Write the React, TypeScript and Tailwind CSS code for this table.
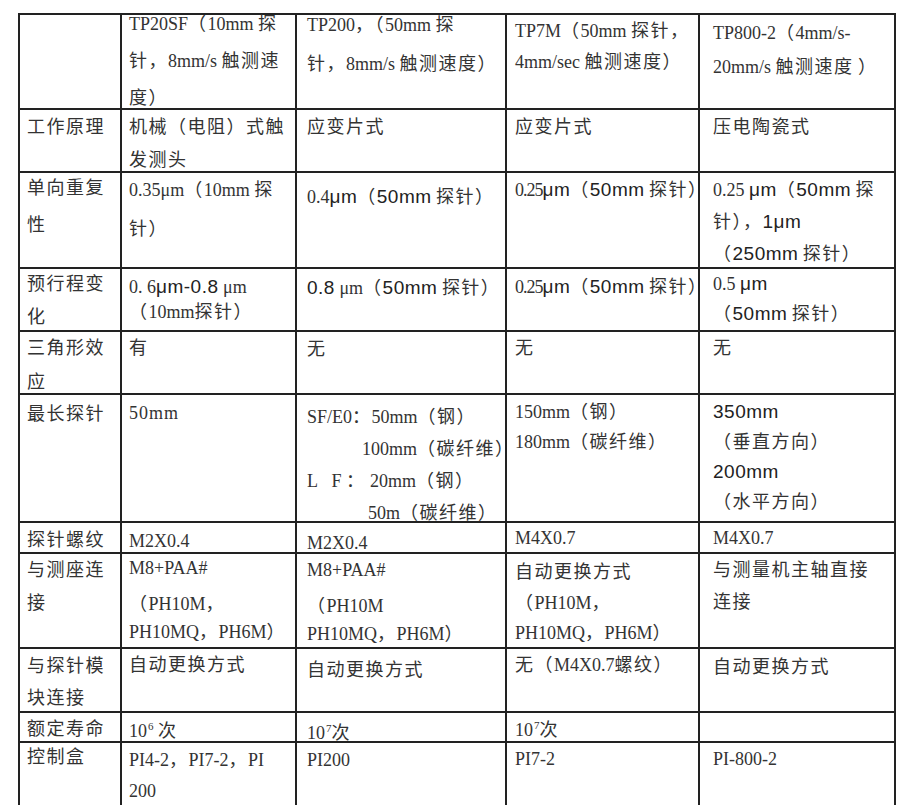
import { Children, type FC, type ReactNode } from "react";

const CJK = /([\u3000-\u303f\u4e00-\u9fff\uff00-\uffef]+)/;

const spaced = (s: string) =>
  s.split(CJK).map((part, i) =>
    i % 2 === 1 ? (
      <span key={i} className="tracking-[1.5px]">
        {part}
      </span>
    ) : (
      part
    )
  );

const Ln: FC<{ className?: string; children?: ReactNode }> = ({ className = "", children }) => (
  <div className={`h-[12px] whitespace-nowrap leading-[12px] ${className}`}>
    {Children.map(children, (c) => (typeof c === "string" ? spaced(c) : c))}
  </div>
);

// Arial-looking runs (μm, 50mm ...)
const S: FC<{ children: ReactNode }> = ({ children }) => (
  <span className="font-['Liberation_Sans',sans-serif] text-[19px] tracking-[0.5px] text-[#222]">{children}</span>
);

const Sup: FC<{ children: ReactNode }> = ({ children }) => (
  <sup className="relative -top-[7px] ml-[1px] text-[11px]">{children}</sup>
);

const Cell: FC<{ className?: string; children?: ReactNode }> = ({ className = "", children }) => (
  <div className={`flex flex-col bg-white ${className}`}>{children}</div>
);

export default function App() {
  return (
    <div className="min-h-screen overflow-hidden bg-white pl-[18px] pt-[13px] font-['Liberation_Serif','Noto_Sans_CJK_SC',serif] text-[18px] text-[#333]">
      <div className="grid w-max grid-cols-[100px_173px_208px_191px_194px] grid-rows-[93px_61px_94px_61px_61px_126px_29px_93px_62px_28px_90px] gap-[2px] bg-[#222] p-[2px]">
        {/* header */}
        <Cell />
        <Cell className="gap-[25px] pl-[7px] pt-[3px]">
          <Ln>TP20SF（10mm 探</Ln>
          <Ln>针，8mm/s 触测速</Ln>
          <Ln>度）</Ln>
        </Cell>
        <Cell className="gap-[27px] pl-[10px] pt-[4px]">
          <Ln>TP200，（50mm 探</Ln>
          <Ln>针，8mm/s 触测速度）</Ln>
        </Cell>
        <Cell className="gap-[19px] pl-[8px] pt-[10px]">
          <Ln>TP7M（50mm 探针，</Ln>
          <Ln>4mm/sec 触测速度）</Ln>
        </Cell>
        <Cell className="gap-[22px] pl-[13px] pt-[12px]">
          <Ln>TP800-2（4mm/s-</Ln>
          <Ln>20mm/s 触测速度 ）</Ln>
        </Cell>

        {/* 工作原理 */}
        <Cell className="pl-[7px] pt-[11px]">
          <Ln>工作原理</Ln>
        </Cell>
        <Cell className="gap-[21px] pl-[7px] pt-[11px]">
          <Ln>机械（电阻）式触</Ln>
          <Ln>发测头</Ln>
        </Cell>
        <Cell className="pl-[10px] pt-[11px]">
          <Ln>应变片式</Ln>
        </Cell>
        <Cell className="pl-[8px] pt-[11px]">
          <Ln>应变片式</Ln>
        </Cell>
        <Cell className="pl-[13px] pt-[11px]">
          <Ln>压电陶瓷式</Ln>
        </Cell>

        {/* 单向重复性 */}
        <Cell className="gap-[25px] pl-[7px] pt-[9px]">
          <Ln>单向重复</Ln>
          <Ln>性</Ln>
        </Cell>
        <Cell className="gap-[27px] pl-[7px] pt-[11px]">
          <Ln>0.35μm（10mm 探</Ln>
          <Ln>针）</Ln>
        </Cell>
        <Cell className="pl-[10px] pt-[18px]">
          <Ln>
            0.4<S>μm</S>（<S>50mm</S> 探针）
          </Ln>
        </Cell>
        <Cell className="pl-[8px] pt-[11px]">
          <Ln>
            <span className="tracking-[-1px]">0.25</span>
            <S>μm</S>（<S>50mm</S> 探针）
          </Ln>
        </Cell>
        <Cell className="gap-[20px] pl-[13px] pt-[11px]">
          <Ln>
            0.25 <S>μm</S>（<S>50mm</S> 探
          </Ln>
          <Ln>
            针），<S>1μm</S>
          </Ln>
          <Ln>
            （<S>250mm</S> 探针）
          </Ln>
        </Cell>

        {/* 预行程变化 */}
        <Cell className="gap-[21px] pl-[7px] pt-[9px]">
          <Ln>预行程变</Ln>
          <Ln>化</Ln>
        </Cell>
        <Cell className="gap-[13px] pl-[7px] pt-[12px]">
          <Ln>
            0. 6<S>μm-0.8</S> μm
          </Ln>
          <Ln>（10mm探针）</Ln>
        </Cell>
        <Cell className="pl-[10px] pt-[13px]">
          <Ln>
            <S>0.8</S> μm（<S>50mm</S> 探针）
          </Ln>
        </Cell>
        <Cell className="pl-[8px] pt-[12px]">
          <Ln>
            <span className="tracking-[-1px]">0.25</span>
            <S>μm</S>（<S>50mm</S> 探针）
          </Ln>
        </Cell>
        <Cell className="gap-[18px] pl-[13px] pt-[9px]">
          <Ln>
            0.5 <S>μm</S>
          </Ln>
          <Ln>
            （<S>50mm</S> 探针）
          </Ln>
        </Cell>

        {/* 三角形效应 */}
        <Cell className="gap-[22px] pl-[7px] pt-[10px]">
          <Ln>三角形效</Ln>
          <Ln>应</Ln>
        </Cell>
        <Cell className="pl-[7px] pt-[10px]">
          <Ln>有</Ln>
        </Cell>
        <Cell className="pl-[10px] pt-[11px]">
          <Ln>无</Ln>
        </Cell>
        <Cell className="pl-[8px] pt-[10px]">
          <Ln>无</Ln>
        </Cell>
        <Cell className="pl-[13px] pt-[10px]">
          <Ln>无</Ln>
        </Cell>

        {/* 最长探针 */}
        <Cell className="pl-[7px] pt-[13px]">
          <Ln>最长探针</Ln>
        </Cell>
        <Cell className="pl-[7px] pt-[12px]">
          <Ln className="tracking-[1px]">50mm</Ln>
        </Cell>
        <Cell className="gap-[20px] pl-[10px] pt-[16px]">
          <Ln>SF/E0：50mm（钢）</Ln>
          <Ln className="pl-[55px]">100mm（碳纤维）</Ln>
          <Ln>L{"\u00a0\u00a0\u00a0"}F{"\u00a0"}：{"\u00a0"}20mm（钢）</Ln>
          <Ln className="pl-[61px]">50m（碳纤维）</Ln>
        </Cell>
        <Cell className="gap-[18px] pl-[8px] pt-[11px]">
          <Ln>150mm（钢）</Ln>
          <Ln>180mm（碳纤维）</Ln>
        </Cell>
        <Cell className="gap-[18px] pl-[13px] pt-[11px]">
          <Ln>
            <S>350mm</S>
          </Ln>
          <Ln>（垂直方向）</Ln>
          <Ln>
            <S>200mm</S>
          </Ln>
          <Ln>（水平方向）</Ln>
        </Cell>

        {/* 探针螺纹 */}
        <Cell className="pl-[7px] pt-[11px]">
          <Ln>探针螺纹</Ln>
        </Cell>
        <Cell className="pl-[7px] pt-[12px]">
          <Ln>M2X0.4</Ln>
        </Cell>
        <Cell className="pl-[10px] pt-[14px]">
          <Ln>M2X0.4</Ln>
        </Cell>
        <Cell className="pl-[8px] pt-[9px]">
          <Ln>M4X0.7</Ln>
        </Cell>
        <Cell className="pl-[13px] pt-[9px]">
          <Ln>M4X0.7</Ln>
        </Cell>

        {/* 与测座连接 */}
        <Cell className="gap-[21px] pl-[7px] pt-[10px]">
          <Ln>与测座连</Ln>
          <Ln>接</Ln>
        </Cell>
        <Cell className="pl-[7px] pt-[8px]">
          <Ln>M8+PAA#</Ln>
          <Ln className="mt-[24px]">（PH10M，</Ln>
          <Ln className="mt-[16px]">PH10MQ，PH6M）</Ln>
        </Cell>
        <Cell className="pl-[10px] pt-[10px]">
          <Ln>M8+PAA#</Ln>
          <Ln className="mt-[24px]">（PH10M</Ln>
          <Ln className="mt-[16px]">PH10MQ，PH6M）</Ln>
        </Cell>
        <Cell className="pl-[8px] pt-[12px]">
          <Ln>自动更换方式</Ln>
          <Ln className="mt-[19px]">（PH10M，</Ln>
          <Ln className="mt-[18px]">PH10MQ，PH6M）</Ln>
        </Cell>
        <Cell className="gap-[20px] pl-[13px] pt-[10px]">
          <Ln>与测量机主轴直接</Ln>
          <Ln>连接</Ln>
        </Cell>

        {/* 与探针模块连接 */}
        <Cell className="gap-[20px] pl-[7px] pt-[11px]">
          <Ln>与探针模</Ln>
          <Ln>块连接</Ln>
        </Cell>
        <Cell className="pl-[7px] pt-[10px]">
          <Ln>自动更换方式</Ln>
        </Cell>
        <Cell className="pl-[10px] pt-[15px]">
          <Ln>自动更换方式</Ln>
        </Cell>
        <Cell className="pl-[8px] pt-[10px]">
          <Ln>无（M4X0.7螺纹）</Ln>
        </Cell>
        <Cell className="pl-[13px] pt-[12px]">
          <Ln>自动更换方式</Ln>
        </Cell>

        {/* 额定寿命 */}
        <Cell className="pl-[7px] pt-[10px]">
          <Ln>额定寿命</Ln>
        </Cell>
        <Cell className="pl-[7px] pt-[12px]">
          <Ln>
            10<Sup>6</Sup> 次
          </Ln>
        </Cell>
        <Cell className="pl-[10px] pt-[14px]">
          <Ln>
            10<Sup>7</Sup>次
          </Ln>
        </Cell>
        <Cell className="pl-[8px] pt-[11px]">
          <Ln>
            10<Sup>7</Sup>次
          </Ln>
        </Cell>
        <Cell />

        {/* 控制盒 */}
        <Cell className="pl-[7px] pt-[8px]">
          <Ln>控制盒</Ln>
        </Cell>
        <Cell className="gap-[19px] pl-[7px] pt-[11px]">
          <Ln>PI4-2，PI7-2，PI</Ln>
          <Ln>200</Ln>
        </Cell>
        <Cell className="pl-[10px] pt-[11px]">
          <Ln>PI200</Ln>
        </Cell>
        <Cell className="pl-[8px] pt-[10px]">
          <Ln>PI7-2</Ln>
        </Cell>
        <Cell className="pl-[13px] pt-[10px]">
          <Ln>PI-800-2</Ln>
        </Cell>
      </div>
    </div>
  );
}
